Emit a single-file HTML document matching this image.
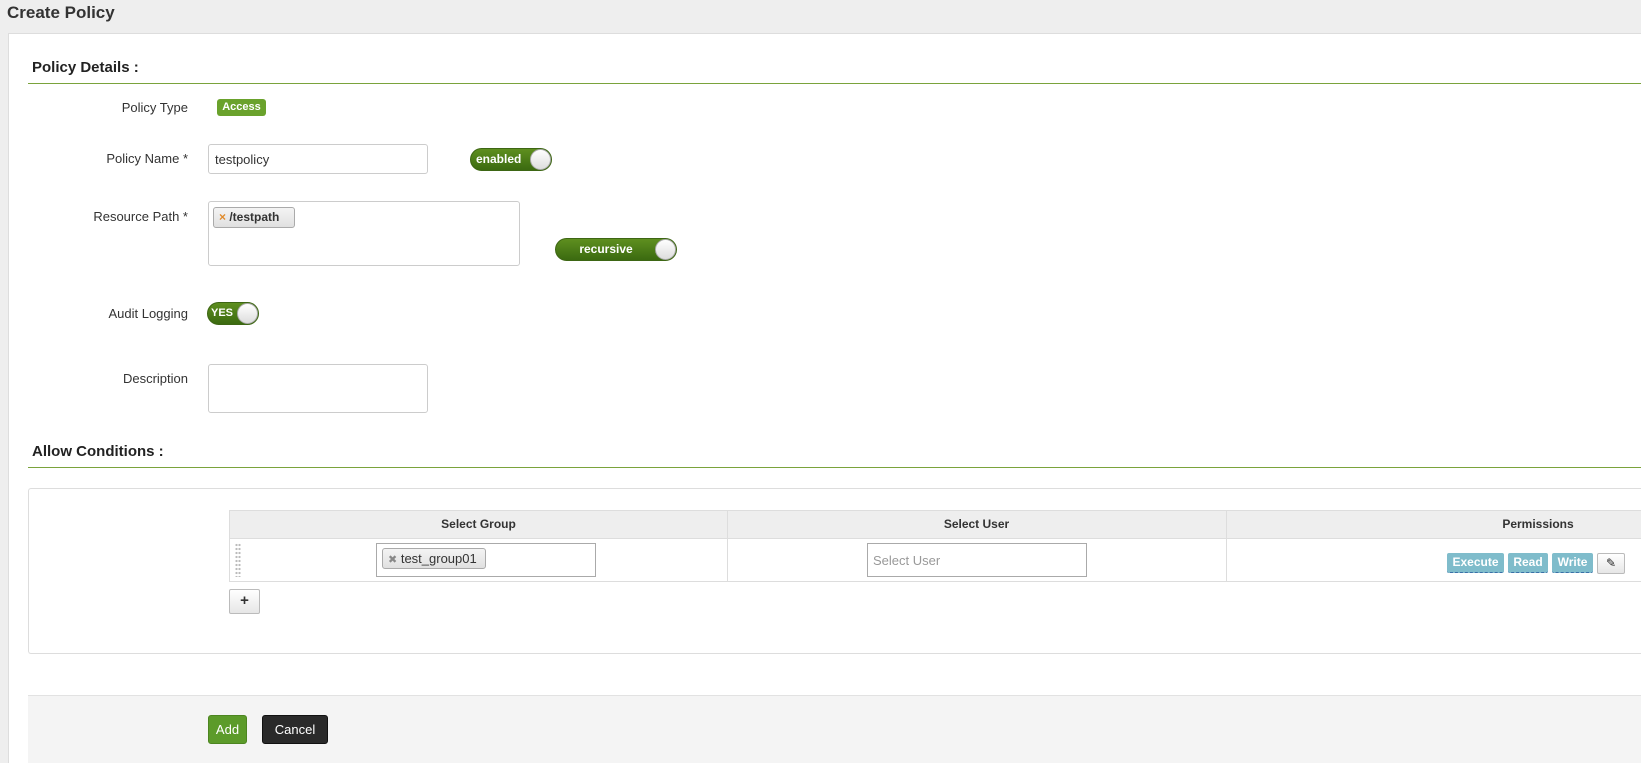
<!DOCTYPE html>
<html style="width:1641px;height:763px;overflow:hidden"><head><style>
*{box-sizing:border-box;margin:0;padding:0}
body{width:1641px;height:763px;background:#eee;font-family:"Liberation Sans",sans-serif;color:#333;position:relative;overflow:hidden;font-size:13px}
.a{position:absolute}
.card{left:8px;top:33px;width:1633px;height:730px;background:#fff;border-left:1px solid #ddd;border-top:1px solid #ddd}
.h{font-weight:bold;font-size:15px;color:#222}
.line{height:1px;background:#7aa33b;left:28px;width:1613px}
.lbl{right:1453px;text-align:right;font-size:13px;color:#333;white-space:nowrap}
.inp{background:#fff;border:1px solid #ccc;border-radius:3px}
.tog{border-radius:12px;background:linear-gradient(#5e8f1f,#3b6a10);color:#fff;font-weight:bold;font-size:12px;border:1px solid #3d6614}
.knob{position:absolute;top:0;right:0;border-radius:50%;background:linear-gradient(#fff,#ddd);border:1px solid #aaa}
.badge{background:#7fbccb;color:#fff;font-weight:bold;font-size:12px;border-radius:2px;border-bottom:1px dashed #3a6fa8;text-align:center;line-height:19px}
</style></head><body>
<div class="a h" style="left:7px;top:3px;font-size:17px;color:#333">Create Policy</div>
<div class="a card"></div>
<div class="a h" style="left:32px;top:59px">Policy Details :</div>
<div class="a line" style="top:83px"></div>

<div class="a lbl" style="top:100px">Policy Type</div>
<div class="a" style="left:217px;top:99px;width:49px;height:17px;background:#6aa22c;border-radius:3px;color:#fff;font-weight:bold;font-size:11px;text-align:center;line-height:17px">Access</div>

<div class="a lbl" style="top:151px">Policy Name *</div>
<div class="a inp" style="left:208px;top:144px;width:220px;height:30px;padding:7px 6px;font-size:13px">testpolicy</div>
<div class="a tog" style="left:470px;top:148px;width:82px;height:23px;line-height:21px;padding-left:5px">enabled<div class="knob" style="width:21px;height:21px"></div></div>

<div class="a lbl" style="top:209px">Resource Path *</div>
<div class="a inp" style="left:208px;top:201px;width:312px;height:65px"></div>
<div class="a" style="left:213px;top:207px;width:82px;height:21px;border:1px solid #aaa;border-radius:3px;background:linear-gradient(#f4f4f4,#e0e0e0);font-size:12px;font-weight:bold;line-height:19px;padding-left:5px"><span style="color:#e08a2a">×</span> /testpath</div>
<div class="a tog" style="left:555px;top:238px;width:122px;height:23px;line-height:21px;text-align:center;padding-right:20px">recursive<div class="knob" style="width:21px;height:21px"></div></div>

<div class="a lbl" style="top:306px">Audit Logging</div>
<div class="a tog" style="left:207px;top:302px;width:52px;height:23px;line-height:21px;padding-left:3px;font-size:11px">YES<div class="knob" style="width:21px;height:21px"></div></div>

<div class="a lbl" style="top:371px">Description</div>
<div class="a inp" style="left:208px;top:364px;width:220px;height:49px"></div>

<div class="a h" style="left:32px;top:443px">Allow Conditions :</div>
<div class="a line" style="top:467px"></div>

<div class="a" style="left:28px;top:488px;width:1613px;height:166px;border:1px solid #ddd;border-right:none;border-radius:3px 0 0 3px"></div>
<div class="a" style="left:229px;top:510px;width:1412px;height:72px;border:1px solid #ddd;border-right:none"></div>
<div class="a" style="left:230px;top:511px;width:1411px;height:28px;background:#eee;border-bottom:1px solid #ddd"></div>
<div class="a" style="left:727px;top:511px;width:1px;height:70px;background:#ddd"></div>
<div class="a" style="left:1226px;top:511px;width:1px;height:70px;background:#ddd"></div>
<div class="a" style="left:230px;top:517px;width:497px;text-align:center;font-weight:bold;font-size:12px">Select Group</div>
<div class="a" style="left:727px;top:517px;width:499px;text-align:center;font-weight:bold;font-size:12px">Select User</div>
<div class="a" style="left:1488px;top:517px;width:100px;text-align:center;font-weight:bold;font-size:12px">Permissions</div>
<div class="a" style="left:235px;top:543px;width:6px;height:34px;background:radial-gradient(circle,#bbb 1px,transparent 1.3px) 0 0/3px 4px"></div>
<div class="a" style="left:376px;top:543px;width:220px;height:34px;border:1px solid #aaa"></div>
<div class="a" style="left:382px;top:548px;width:104px;height:21px;border:1px solid #aaa;border-radius:3px;background:linear-gradient(#f4f4f4,#e0e0e0);font-size:13px;line-height:19px;padding-left:5px"><span style="color:#888;font-size:11px">✖</span> test_group01</div>
<div class="a" style="left:867px;top:543px;width:220px;height:34px;border:1px solid #aaa;color:#999;font-size:13px;padding:9px 5px">Select User</div>
<div class="a badge" style="left:1447px;top:553px;width:57px">Execute</div>
<div class="a badge" style="left:1508px;top:553px;width:40px">Read</div>
<div class="a badge" style="left:1552px;top:553px;width:41px">Write</div>
<div class="a" style="left:1597px;top:553px;width:28px;height:21px;border:1px solid #bbb;border-radius:2px;background:linear-gradient(#fff,#e6e6e6);text-align:center;font-size:12px;line-height:19px;color:#222">✎</div>
<div class="a" style="left:229px;top:589px;width:31px;height:25px;border:1px solid #bbb;border-radius:2px;background:linear-gradient(#fff,#e6e6e6);text-align:center;font-weight:bold;font-size:15px;line-height:22px">+</div>

<div class="a" style="left:28px;top:695px;width:1613px;height:68px;background:#f4f4f4;border-top:1px solid #e2e2e2"></div>
<div class="a" style="left:208px;top:715px;width:39px;height:29px;background:#5c9b2a;border:1px solid #4c8520;border-radius:3px;color:#fff;text-align:center;line-height:27px;font-size:13px">Add</div>
<div class="a" style="left:262px;top:715px;width:66px;height:29px;background:#2a2a2a;border:1px solid #111;border-radius:3px;color:#fff;text-align:center;line-height:27px;font-size:13px">Cancel</div>
</body></html>
